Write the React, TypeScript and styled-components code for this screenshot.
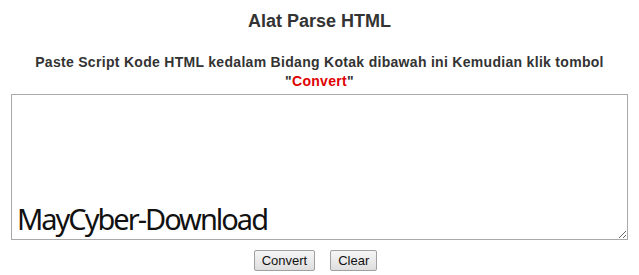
import React from 'react';
import styled, { createGlobalStyle } from 'styled-components';

const GlobalStyle = createGlobalStyle`
  html, body {
    margin: 0;
    padding: 0;
    background: #fff;
  }
  body {
    font-family: 'Liberation Sans', Arial, sans-serif;
    color: #333;
  }
`;

const Page = styled.div`
  width: 639px;
  padding-top: 10px;
  display: flex;
  flex-direction: column;
  align-items: center;
`;

const Title = styled.h2`
  margin: 0;
  font-size: 18px;
  font-weight: bold;
  line-height: 22px;
`;

const Hint = styled.p`
  margin: 21px 0 0;
  font-size: 14px;
  font-weight: bold;
  letter-spacing: 0.3px;
  line-height: 19px;
  text-align: center;
`;

const Red = styled.span`
  color: #e00000;
`;

const Editor = styled.textarea`
  box-sizing: border-box;
  width: 617px;
  height: 146px;
  margin-top: 3px;
  padding: 107px 5px 0;
  border: 1px solid #a9a9a9;
  font-family: 'Noto Sans', sans-serif;
  font-size: 29px;
  letter-spacing: -2px;
  line-height: 34px;
  color: #111;
  resize: both;
  outline: none;
`;

const Actions = styled.div`
  display: flex;
  gap: 15px;
  margin-top: 10px;
  margin-right: 8px;
`;

const Button = styled.button`
  font-family: 'Liberation Sans', Arial, sans-serif;
  font-size: 13px;
  color: #111;
  height: 21px;
  padding: 0 7px;
  border: 1px solid #a0a0a0;
  border-radius: 2px;
  background: linear-gradient(#f6f6f6, #dedede);
`;

export default function App() {
  return (
    <>
      <GlobalStyle />
      <Page>
        <Title>Alat Parse HTML</Title>
        <Hint>
          Paste Script Kode HTML kedalam Bidang Kotak dibawah ini Kemudian klik tombol
          <br />
          "<Red>Convert</Red>"
        </Hint>
        <Editor defaultValue="MayCyber-Download" />
        <Actions>
          <Button>Convert</Button>
          <Button>Clear</Button>
        </Actions>
      </Page>
    </>
  );
}
